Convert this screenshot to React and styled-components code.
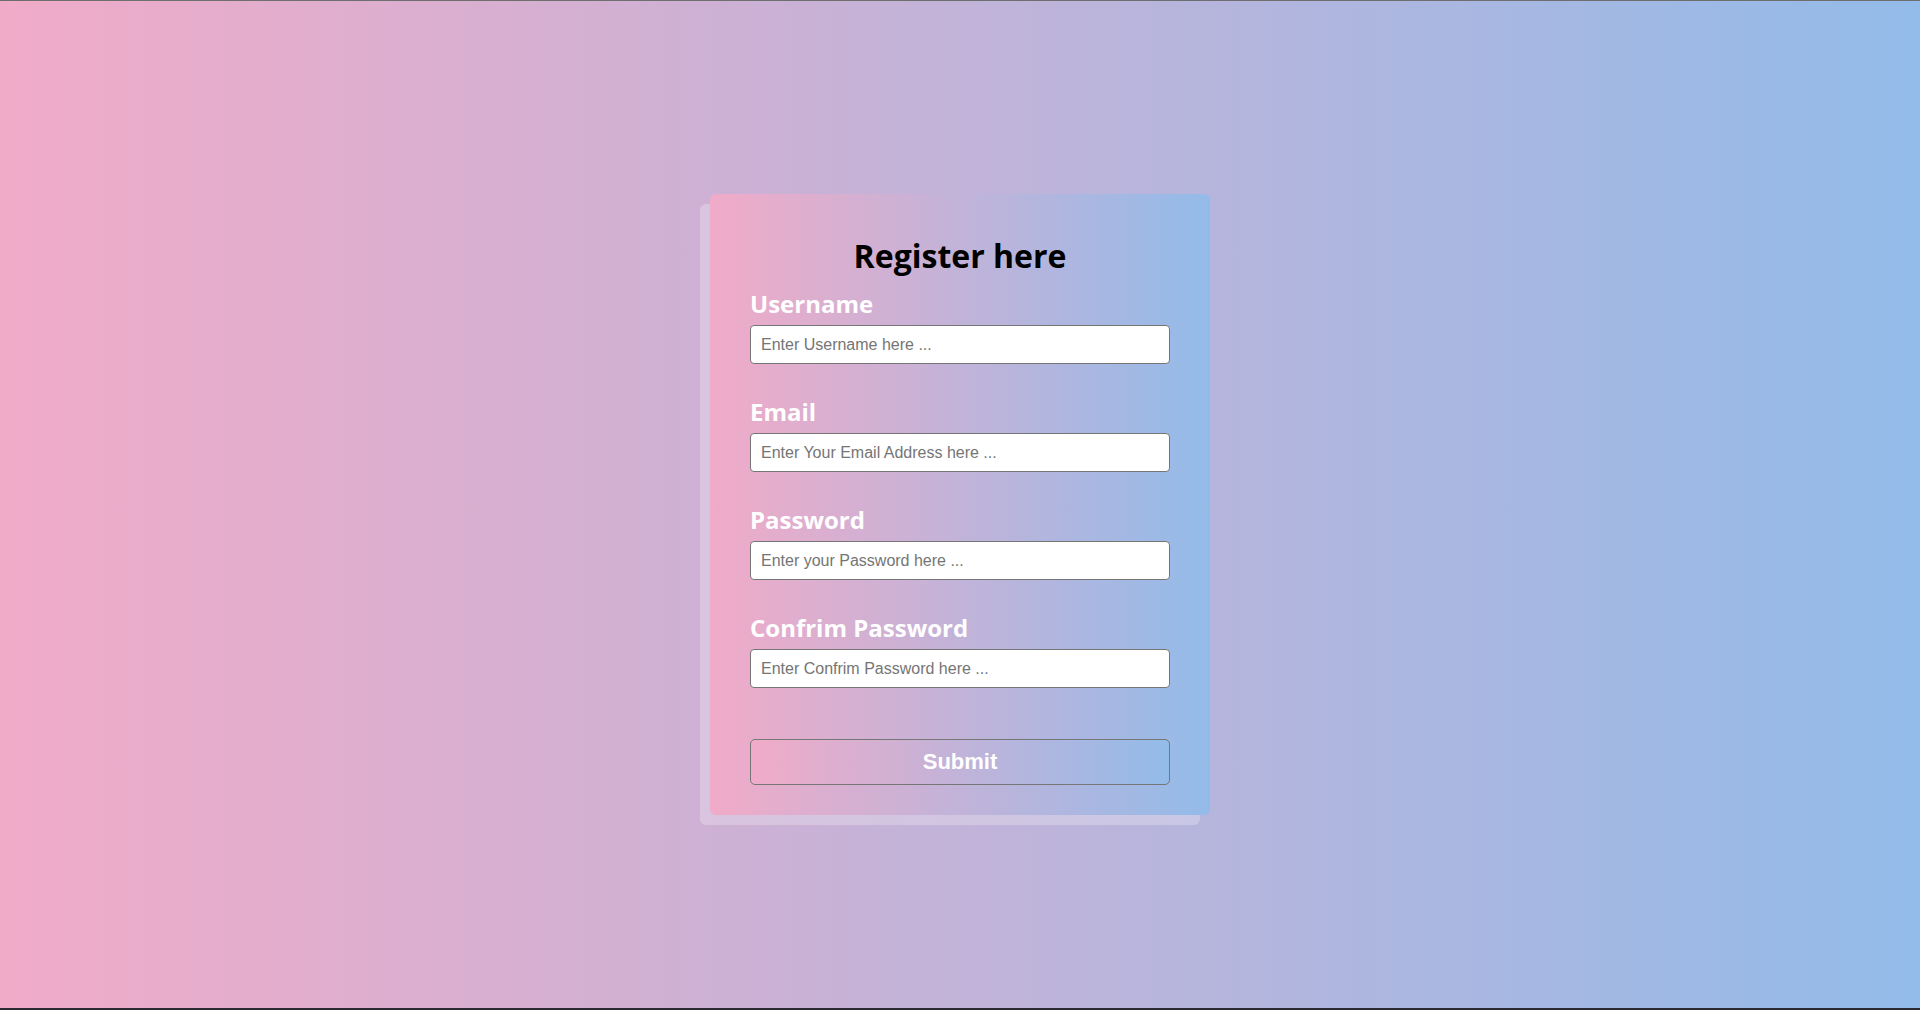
import styled, { createGlobalStyle } from 'styled-components';

const GlobalStyle = createGlobalStyle`
	* {
		box-sizing: border-box;
	}
	html, body {
		margin: 0;
		padding: 0;
	}
	body {
		font-family: 'Open Sans', 'Liberation Sans', sans-serif;
	}
`;

const fields = [
	{ id: 'username', label: 'Username', type: 'text', placeholder: 'Enter Username here ...' },
	{ id: 'email', label: 'Email', type: 'email', placeholder: 'Enter Your Email Address here ...' },
	{ id: 'password', label: 'Password', type: 'password', placeholder: 'Enter your Password here ...' },
	{ id: 'confirm', label: 'Confrim Password', type: 'password', placeholder: 'Enter Confrim Password here ...' },
];

function App() {
	return (
		<>
			<GlobalStyle />
			<Page>
				<Card>
					<Title>Register here</Title>
					<Form onSubmit={(e) => e.preventDefault()}>
						{fields.map((field) => (
							<Field key={field.id}>
								<Label htmlFor={field.id}>{field.label}</Label>
								<Input id={field.id} type={field.type} placeholder={field.placeholder} />
							</Field>
						))}
						<SubmitButton type="submit">Submit</SubmitButton>
					</Form>
				</Card>
			</Page>
		</>
	);
}

const gradient = 'linear-gradient(to right, #f0abc8, #93bbe9)';

const Page = styled.div`
	min-height: 100vh;
	display: flex;
	align-items: center;
	justify-content: center;
	background: ${gradient};
	border-top: 1px solid #6e6e6e;
	border-bottom: 2px solid #2c2a31;
`;

const Card = styled.div`
	width: 500px;
	padding: 40px 40px 30px;
	border-radius: 6px;
	background: ${gradient};
	box-shadow: -10px 10px 0 rgba(255, 255, 255, 0.25);
`;

const Title = styled.h1`
	margin: 0 0 10px;
	text-align: center;
	font-size: 32px;
	font-weight: 700;
	color: #000;
`;

const Form = styled.form`
	display: flex;
	flex-direction: column;
	gap: 30.5px;
`;

const Field = styled.div`
	display: flex;
	flex-direction: column;
	gap: 5.5px;
`;

const Label = styled.label`
	font-size: 24px;
	font-weight: 700;
	color: #fff;
`;

const Input = styled.input`
	width: 100%;
	padding: 9.5px 10px;
	font-family: 'Liberation Sans', Arial, sans-serif;
	font-size: 16px;
	border: 1px solid #767676;
	border-radius: 4px;
	background: #fff;
	outline: none;

	&::placeholder {
		color: #757575;
	}
`;

const SubmitButton = styled.button`
	margin-top: 20.5px;
	height: 46px;
	width: 100%;
	border: 1px solid #767676;
	border-radius: 5px;
	background: ${gradient};
	color: #fff;
	font-family: 'Liberation Sans', Arial, sans-serif;
	font-size: 22px;
	font-weight: 700;
	cursor: pointer;
`;

export default App;
